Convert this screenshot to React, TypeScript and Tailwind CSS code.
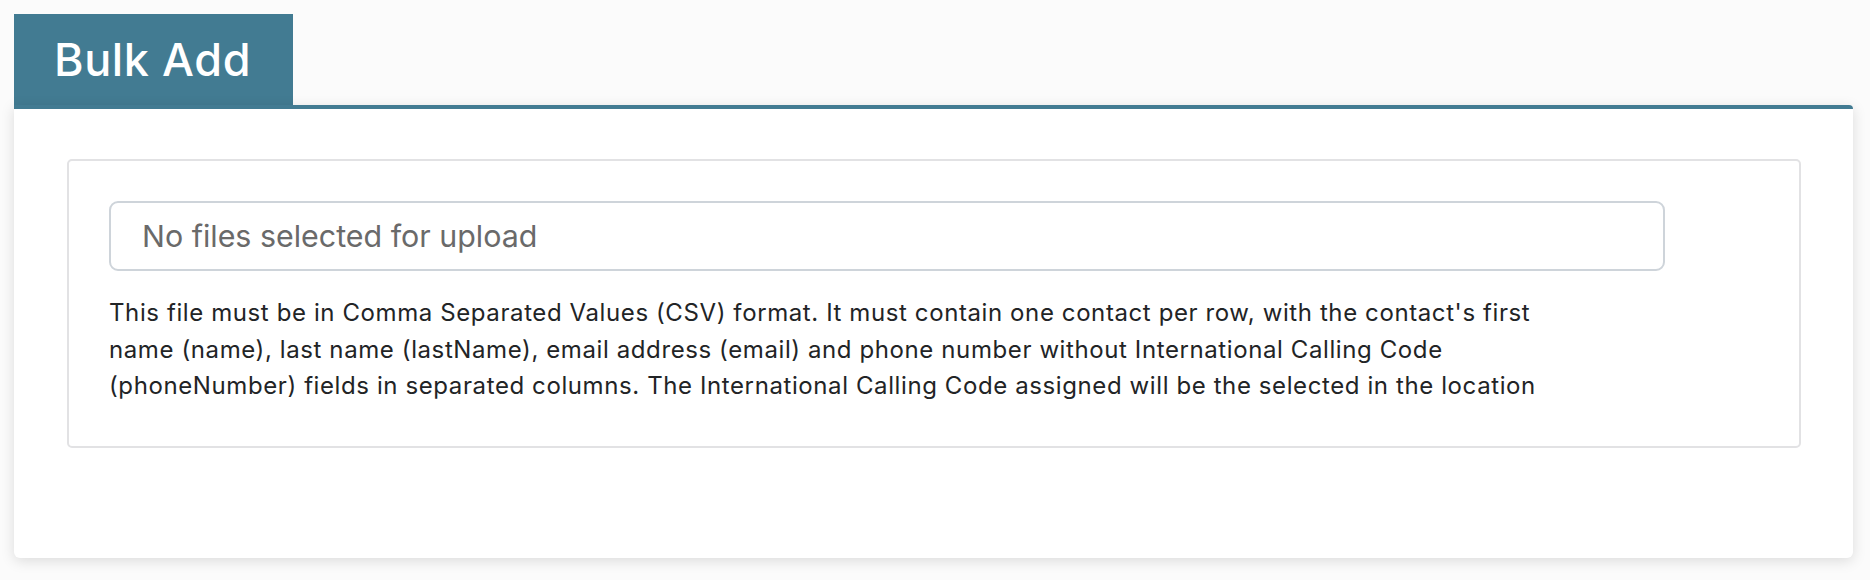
import React from "react";

export default function App() {
  return (
    <div
      className="min-h-[580px] w-full bg-[#fbfbfb] pt-[14px] pl-[14px] pr-[17px]"
      style={{ fontFamily: "Inter, 'Liberation Sans', sans-serif" }}
    >
      <div className="flex h-[91px] w-[279px] items-center bg-[#427b92] pl-[40px]">
        <span className="text-[45px] font-medium leading-none text-white tracking-[0.6px]">Bulk Add</span>
      </div>
      <div className="h-[453px] rounded-b-[6px] rounded-tr-[4px] border-t-4 border-[#427b92] bg-white pt-[50px] pl-[53px] pr-[52px] shadow-[0_3px_14px_rgba(0,0,0,0.13)]">
        <div className="rounded-[5px] border-2 border-[#e2e2e4] px-[40px] pt-[40px] pb-[41px]">
          <div className="flex h-[70px] w-[1556px] items-center rounded-[9px] border-2 border-[#ced4da] pl-[31px]">
            <span className="text-[30.4px] leading-none text-[#6a6a6a]">No files selected for upload</span>
          </div>
          <div className="mt-[24px] text-[24px] leading-[36.5px] tracking-[0.6px] text-[#222426]">
            <div className="whitespace-nowrap">
              This file must be in Comma Separated Values (CSV) format. It must contain one contact per row, with the contact's first
            </div>
            <div className="whitespace-nowrap">
              name (name), last name (lastName), email address (email) and phone number without International Calling Code
            </div>
            <div className="whitespace-nowrap">
              (phoneNumber) fields in separated columns. The International Calling Code assigned will be the selected in the location
            </div>
          </div>
        </div>
      </div>
    </div>
  );
}
